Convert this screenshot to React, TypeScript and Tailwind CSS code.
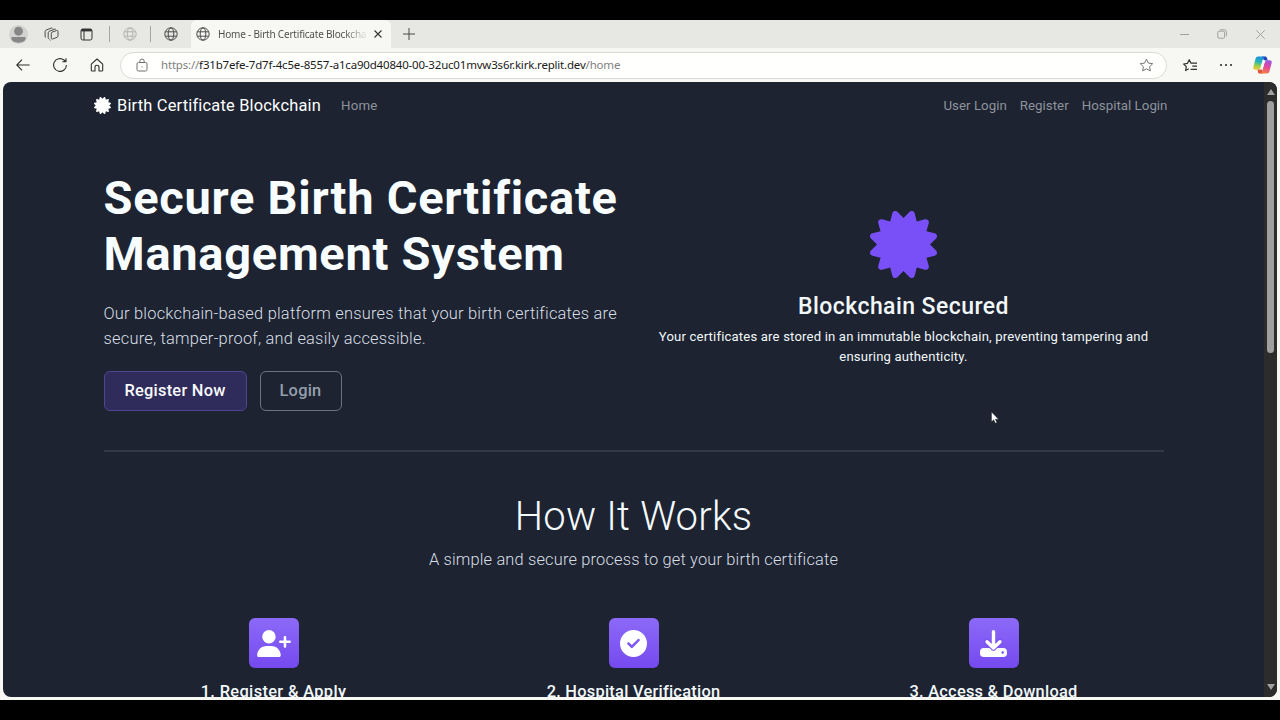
import { FaCertificate, FaUserPlus, FaCircleCheck } from 'react-icons/fa6'

const steps = [
  { title: '1. Register & Apply', icon: FaUserPlus, size: 'h-[27px] w-[34px]', spacing: 'tracking-[0.35px]' },
  { title: '2. Hospital Verification', icon: FaCircleCheck, size: 'h-[27px] w-[27px]', spacing: 'tracking-[0.25px]' },
  { title: '3. Access & Download', icon: DownloadIcon, size: 'h-[27px] w-[27px]', spacing: 'tracking-[0.25px]' },
]

function DownloadIcon({ className }: { className?: string }) {
  return (
    <svg viewBox="0 0 27 27" className={className} fill="none" strokeLinecap="round" strokeLinejoin="round">
      <rect y="18" width="27" height="9" rx="3.8" fill="#fff" />
      <path d="M7 11.700l6.500 6.300 6.500-6.300" stroke="#7a50f1" strokeWidth="5.400" />
      <path d="M13.500 1.700V17.500M7 11.700l6.500 6.300 6.500-6.300" stroke="#fff" strokeWidth="3.400" />
      <circle cx="22.700" cy="22.500" r="1.200" fill="#7549ef" />
    </svg>
  )
}

function Globe({ className }: { className?: string }) {
  return (
    <svg viewBox="0 0 14 14" className={`h-3.5 w-3.5 shrink-0 ${className || ''}`} fill="none" stroke="currentColor" strokeWidth="1">
      <circle cx="7" cy="7" r="6.2" />
      <ellipse cx="7" cy="7" rx="2.8" ry="6.2" />
      <path d="M1.3 4.8h11.4M1.3 9.2h11.4" />
    </svg>
  )
}

function TabStrip() {
  return (
    <div className="flex h-7 items-end bg-[#e7e8e4] text-[#4a4b4a]">
      <div className="flex h-7 w-[191px] shrink-0 items-center">
        <svg viewBox="0 0 18 18" className="ml-[9px] h-[19px] w-[19px]">
          <circle cx="9" cy="9" r="9" fill="#d2d3d0" />
          <circle cx="9" cy="5.9" r="4.2" fill="#868786" />
          <path d="M3.400 11.300h11.200c.8 0 1.200.5 1.200 1.200 0 2.300-3 4.200-6.800 4.200s-6.800-1.900-6.800-4.200c0-.7.4-1.200 1.200-1.200z" fill="#868786" />
        </svg>
        <svg viewBox="0 0 15 15" className="ml-4 h-[15px] w-[15px]" fill="none" stroke="currentColor" strokeWidth="1" strokeLinejoin="round">
          <path d="M8 5.200l4.600-1.700c.8-.3 1.400 0 1.400.8v4.500c0 .7-.3 1.200-1 1.500L8.700 12c-.8.3-1.400 0-1.400-.9V6.400c0-.600.200-1 .7-1.200z" />
          <path d="M5 11.800c-.5-.1-.8-.5-.8-1.100V5.800c0-.700.3-1.100.9-1.400l5.600-2.200c.5-.2 1 0 1.200.4" />
          <path d="M2 10.500c-.600-.2-.9-.600-.9-1.200V4.500c0-.7.3-1.100.9-1.400L7.500 1c.6-.2 1.100 0 1.300.5M6.500 13.300c-.500-.1-.8-.400-.9-.800" />
        </svg>
        <svg viewBox="0 0 13 13" className="ml-[21px] h-[13px] w-[13px]" fill="none" stroke="#333" strokeWidth="1">
          <rect x="1" y="1" width="11" height="11" rx="1.800" />
          <path d="M1.200 2.200h10.600" strokeWidth="2.400" />
          <path d="M4 3v9" />
        </svg>
        <div className="ml-4 h-4 w-px bg-[#a5a6a3]" />
        <Globe className="ml-[13px] text-[#b3b4b1]" />
        <div className="ml-[13px] h-4 w-px bg-[#a5a6a3]" />
        <Globe className="ml-[13px]" />
      </div>
      <div className="flex h-7 w-[200px] items-center rounded-t-md bg-[#f7f8f4] pl-[5px]">
        <Globe />
        <div className="ml-2 w-[148px] overflow-hidden whitespace-nowrap bg-linear-to-r from-[#4a4b4a] from-85% to-[#4a4b4a]/10 bg-clip-text font-['Noto_Sans',sans-serif] text-[10px] leading-4 tracking-[-0.2px] text-transparent">
          Home - Birth Certificate Blockchain
        </div>
        <svg viewBox="0 0 8 8" className="ml-[8px] h-2 w-2" stroke="#333" strokeWidth="1.100">
          <path d="M.5.5l7 7M7.500.5l-7 7" />
        </svg>
      </div>
      <svg viewBox="0 0 12 12" className="mb-2 ml-[12px] h-3 w-3" stroke="currentColor" strokeWidth="1">
        <path d="M6 0v12M0 6h12" />
      </svg>
      <div className="ml-auto flex h-7 items-center text-[#a0a19f]">
        <svg viewBox="0 0 9 9" className="mr-[28px] h-[9px] w-[9px]" stroke="currentColor">
          <path d="M0 4.500h9" />
        </svg>
        <svg viewBox="0 0 10 10" className="mr-[29px] h-2.5 w-2.5" fill="none" stroke="currentColor">
          <rect x=".8" y="2.200" width="6.800" height="7" rx="1" />
          <path d="M3 .8h4.500c1.200 0 1.900.7 1.900 1.900v4.500" />
        </svg>
        <svg viewBox="0 0 9 9" className="mr-[15px] h-[9px] w-[9px]" stroke="currentColor">
          <path d="M.3.3l8.400 8.400M8.700.3L.3 8.700" />
        </svg>
      </div>
    </div>
  )
}

function CopilotLogo() {
  return (
    <svg viewBox="0 0 19 18" className="h-[18px] w-[19px]">
      <defs>
        <linearGradient id="cpLeft" x1="0.500" y1="0" x2="0.3" y2="1">
          <stop offset="0" stopColor="#1f8fe0" />
          <stop offset=".4" stopColor="#22b5b5" />
          <stop offset=".7" stopColor="#9bcf4e" />
          <stop offset="1" stopColor="#f3c42f" />
        </linearGradient>
        <linearGradient id="cpRight" x1="0.700" y1="0" x2="0.4" y2="1">
          <stop offset="0" stopColor="#9d55dd" />
          <stop offset=".5" stopColor="#e3489d" />
          <stop offset="1" stopColor="#f6803f" />
        </linearGradient>
      </defs>
      <path d="M9 .5h3.200c1 0 1.500.6 1.800 1.500l.9 2.500H11z" fill="#2446b8" />
      <path d="M6.500 17.500h3.300L9 13.500H4.500l.5 2.500c.2 1 .7 1.500 1.500 1.500z" fill="#e0553b" />
      <path d="M5 .5h7c-1 .3-1.500 1-1.800 2.100L8 10.500C7.300 12.800 6.300 13.700 4 13.700H2.300C.6 13.700 0 12.500.4 10.800l2-7.600C2.900 1.400 3.500.5 5 .5z" fill="url(#cpLeft)" />
      <path d="M14 17.500H7.300c1-.3 1.500-1 1.800-2.100l2.200-7.900c.7-2.300 1.700-3.200 4-3.200h1.400c1.700 0 2.300 1.200 1.900 2.900l-2 7.600c-.5 1.800-1.100 2.700-2.600 2.700z" fill="url(#cpRight)" />
      <path d="M10.600 5.200L8.600 12.200" stroke="#f7f8f4" strokeWidth="2.400" strokeLinecap="round" />
    </svg>
  )
}

function AddressBar() {
  const star = 'M7.500 1.200l1.900 3.900 4.300.6-3.100 3 .7 4.200-3.800-2-3.800 2 .7-4.200-3.100-3 4.300-.6z'
  return (
    <div className="flex h-[34px] items-center bg-[#f7f8f4] text-[#303130]">
      <svg viewBox="0 0 14 12" className="ml-[16px] h-3 w-3.5" fill="none" stroke="currentColor" strokeWidth="1.100">
        <path d="M6 .6L.8 6 6 11.400M1 6h12.600" />
      </svg>
      <svg viewBox="0 0 14 14" className="ml-[23px] h-3.5 w-3.5" fill="none" stroke="currentColor" strokeWidth="1.100">
        <path d="M13.400 7A6.400 6.400 0 1 1 11 2l1.500 1.500M13 .3v3.500H9.300" />
      </svg>
      <svg viewBox="0 0 14 14" className="ml-[23px] h-3.5 w-3.5" fill="none" stroke="currentColor" strokeWidth="1.100" strokeLinejoin="round">
        <path d="M1.300 6.200L7 1l5.700 5.200v6c0 .5-.3.800-.8.800H9V9.200C9 8.100 8.200 7.300 7 7.300s-2 .8-2 1.900V13H2.100c-.5 0-.8-.3-.8-.8z" />
      </svg>
      <div className="ml-4 flex h-[27px] w-[1047px] items-center rounded-full border border-[#d9dad6] bg-[#fffffd]">
        <svg viewBox="0 0 12 14" className="ml-[15px] h-3.5 w-3" fill="none" stroke="#6f706f" strokeWidth="1">
          <rect x="1" y="4.500" width="10" height="8.500" rx="1.500" />
          <path d="M3.800 4.500V3.200a2.200 2.200 0 0 1 4.400 0v1.300" />
          <circle cx="6" cy="8.800" r=".6" fill="#6f706f" stroke="none" />
        </svg>
        <div className="ml-[13px] whitespace-nowrap font-['Noto_Sans',sans-serif] text-[11.500px] tracking-[-0.19px] text-[#80817f]">
          https://<span className="text-[#1b1b1b]">f31b7efe-7d7f-4c5e-8557-a1ca90d40840-00-32uc01mvw3s6r.kirk.replit.dev</span>/home
        </div>
        <svg viewBox="0 0 15 15" className="ml-auto mr-[12px] h-[15px] w-[15px]" fill="none" stroke="#747574" strokeLinejoin="round">
          <path d={star} />
        </svg>
      </div>
      <svg viewBox="0 0 15 15" className="ml-[16px] h-[15px] w-[15px]" fill="none" stroke="currentColor" strokeWidth="1.200" strokeLinejoin="round">
        <path d="M5.800 10.800l-3.200 1.700.7-3.800L.7 6l3.700-.6 1.800-3.700L8 5.200h6M9.300 8.200H14M7.600 11.300H14" />
      </svg>
      <svg viewBox="0 0 12 2" className="ml-[22px] h-0.5 w-3" fill="#222">
        <circle cx="1" cy="1" r="1" />
        <circle cx="6" cy="1" r="1" />
        <circle cx="11" cy="1" r="1" />
      </svg>
      <div className="ml-[21px]">
        <CopilotLogo />
      </div>
    </div>
  )
}

function Navbar() {
  return (
    <nav className="mx-auto flex h-12 w-[1080px] shrink-0 items-center whitespace-nowrap text-[13.300px] text-[#8e939b]">
      <FaCertificate className="mb-0.5 h-[17px] w-[17px] text-white" />
      <a className="ml-[6.500px] w-[204px] text-[16.400px] tracking-[0.2px] text-white">Birth Certificate Blockchain</a>
      <a className="ml-5 tracking-[0.2px]">Home</a>
      <div className="ml-auto mr-[6px] flex gap-[13px] tracking-[0.02px]">
        <a>User Login</a>
        <a>Register</a>
        <a>Hospital Login</a>
      </div>
    </nav>
  )
}

function Hero() {
  return (
    <section className="mx-auto flex h-[280px] w-[1080px] shrink-0 whitespace-nowrap">
      <div className="w-[540px] pl-2.5">
        <h1 className="text-[47px] font-bold leading-[56px] tracking-[0.73px] text-[#f8fdff]">
          Secure Birth Certificate
          <br />
          Management System
        </h1>
        <p className="mt-[19px] text-[16.400px] font-light leading-[25.300px] tracking-[0.23px] text-[#d9dfe6]">
          Our blockchain-based platform ensures that your birth certificates are
          <br />
          secure, tamper-proof, and easily accessible.
        </p>
        <div className="mt-[19px] flex gap-[13px] text-[16.400px] font-medium tracking-[0.25px]">
          <button className="h-10 w-[143px] rounded-md border border-[#4f4692] bg-[#2f2b5a] pt-0.5 text-[#f8fafc]">Register Now</button>
          <button className="h-10 w-[82px] rounded-md border border-[#6b7280] pt-0.5 text-[#949eac]">Login</button>
        </div>
      </div>
      <div className="flex w-[540px] flex-col items-center pt-[41px] text-center text-[#f2f8fa]">
        <FaCertificate className="h-[67px] w-[67px] text-[#7950f8]" />
        <h3 className="mt-[15px] text-[23px] font-medium leading-7 tracking-[0.43px]">Blockchain Secured</h3>
        <p className="mt-[6px] text-[13.100px] leading-5 tracking-[0.18px]">
          Your certificates are stored in an immutable blockchain, preventing tampering and
          <br />
          ensuring authenticity.
        </p>
      </div>
    </section>
  )
}

export default function App() {
  return (
    <div className="h-[720px] w-[1280px] overflow-hidden bg-black py-5 font-[Roboto,sans-serif]">
      <div className="flex h-[680px] flex-col bg-[#f7f8f4]">
        <TabStrip />
        <AddressBar />
        <div className="ml-[3px] flex h-[615px] w-[1274px] overflow-hidden rounded-lg bg-[#1d2331]">
          <main className="flex h-[615px] w-[1261px] flex-col overflow-hidden">
            <Navbar />
            <div className="h-[40px] shrink-0" />
            <Hero />
            <div className="mx-auto h-[2px] w-[1060px] shrink-0 bg-[#323845]" />
            <section className="mx-auto w-[1080px] whitespace-nowrap pt-[41px] text-center">
              <h2 className="text-[40px] font-light leading-[48px] tracking-[0.2px] text-[#f4fbff]">How It Works</h2>
              <p className="mt-[6px] text-[16.400px] font-light leading-[25px] tracking-[0.17px] text-[#d9dfe6]">
                A simple and secure process to get your birth certificate
              </p>
              <div className="mt-[46px] grid grid-cols-3">
                {steps.map(({ title, icon: Icon, size, spacing }) => (
                  <div key={title} className="flex flex-col items-center">
                    <div className="flex h-[50px] w-[50px] items-center justify-center rounded-md bg-linear-to-b from-[#8d69f8] to-[#7549ef] text-white">
                      <Icon className={size} />
                    </div>
                    <h5 className={`mt-[14px] text-[16.400px] font-medium leading-5 text-[#f2f8fa] ${spacing}`}>{title}</h5>
                  </div>
                ))}
              </div>
            </section>
          </main>
          <div className="flex w-[13px] flex-col items-center bg-[#2c2c2c] py-[7px]">
            <svg viewBox="0 0 8 6" className="h-1.5 w-2" fill="#a1a1a1">
              <path d="M4 0l4 6H0z" />
            </svg>
            <div className="mt-[6px] h-[252px] w-[7px] rounded-full bg-[#9f9f9f]" />
            <svg viewBox="0 0 8 6" className="mt-auto h-1.5 w-2" fill="#a1a1a1">
              <path d="M4 6l4-6H0z" />
            </svg>
          </div>
        </div>
      </div>
      <svg viewBox="0 0 8 12" className="absolute left-[991px] top-[411px] h-[13px] w-[8px]">
        <path d="M.5.5v9.800l2.200-2 1.700 3.400 1.500-.7-1.600-3.300h3.200z" fill="#fff" stroke="#222" strokeWidth=".4" />
      </svg>
    </div>
  )
}
